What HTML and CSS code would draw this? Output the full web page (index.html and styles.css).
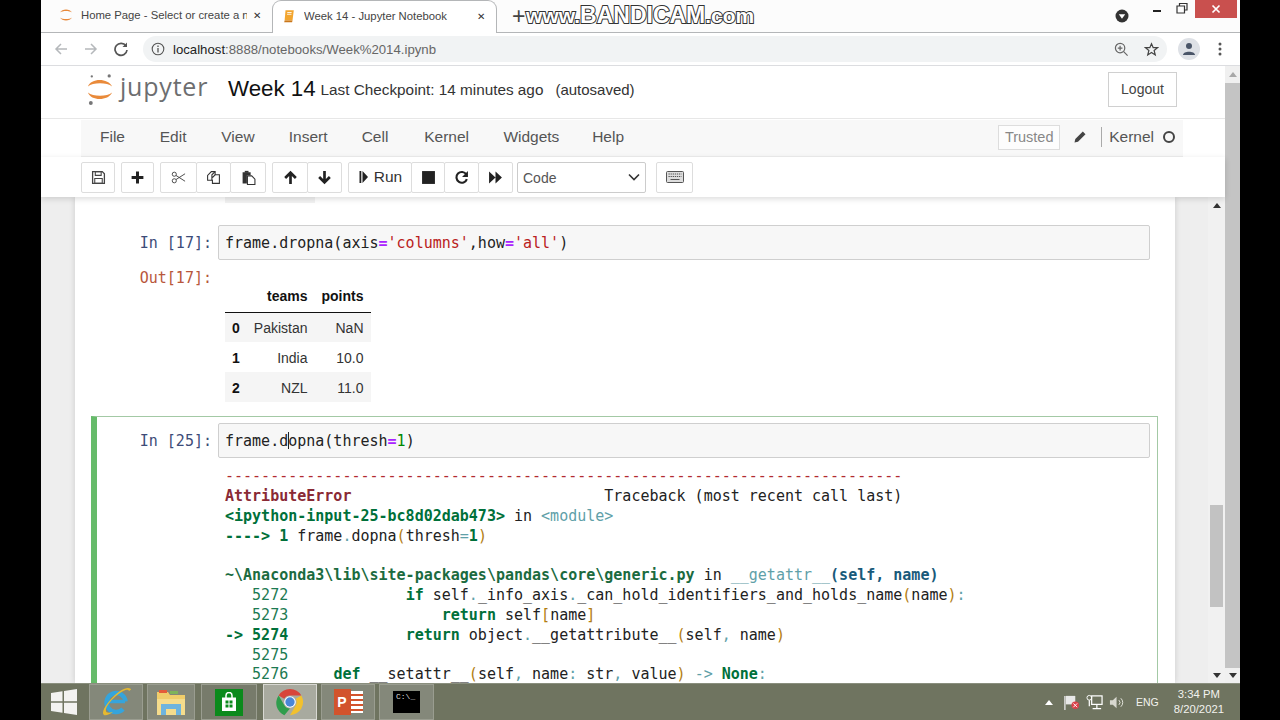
FILE: index.html
```html
<!DOCTYPE html>
<html lang="en">
<head>
<meta charset="utf-8">
<title>Week 14 - Jupyter Notebook</title>
<link rel="stylesheet" href="styles.css">
</head>
<body>
<div class="window">
  <div class="tabstrip">
    <div class="tab">
      <svg class="fav" viewBox="0 0 16 16"><path d="M2 5.500C4 1.500 12 1.500 14 5.500C11.500 3.500 4.500 3.500 2 5.500Z" fill="#e8883a"/><path d="M2 10.500C4 14.500 12 14.500 14 10.500C11.500 12.500 4.500 12.500 2 10.500Z" fill="#e8883a"/></svg>
      <span class="tab-title">Home Page - Select or create a n</span>
      <span class="tab-x">✕</span>
    </div>
    <div class="tab active">
      <svg class="fav book" viewBox="0 0 16 16"><path d="M4 1.500H13.500L12 13H3Z" fill="#f2a52e"/><path d="M3 13L2.500 15H11.500L12 13Z" fill="#c9761a"/><path d="M6 4H11M5.800 6H10.800" stroke="#fff" stroke-width="1"/></svg>
      <span class="tab-title">Week 14 - Jupyter Notebook</span>
      <span class="tab-x">✕</span>
    </div>
    <span class="newtab">+</span>
    <div class="winbtns">
      <svg class="badge" viewBox="0 0 14 14"><circle cx="7" cy="7" r="6.500" fill="#333"/><path d="M3.800 5.300H10.200L7 9.800Z" fill="#fff"/></svg>
      <svg class="wb" viewBox="0 0 16 16"><path d="M4 9H12" stroke="#222" stroke-width="2"/></svg>
      <svg class="wb" viewBox="0 0 16 16"><path d="M5.500 5V2.500H13V9H10.500M3 5H10.500V12H3Z" fill="none" stroke="#333" stroke-width="1.200"/></svg>
      <div class="close"><svg viewBox="0 0 10 10" width="10" height="10"><path d="M1.500 1.500L8.500 8.500M8.500 1.500L1.500 8.500" stroke="#fff" stroke-width="1.700"/></svg></div>
    </div>
  </div>
  <div class="addrbar">
    <svg class="nav" viewBox="0 0 16 16"><path d="M14 8H3M8 3L3 8L8 13" fill="none" stroke="#b5b8bb" stroke-width="1.500"/></svg>
    <svg class="nav" viewBox="0 0 16 16"><path d="M2 8H13M8 3L13 8L8 13" fill="none" stroke="#b5b8bb" stroke-width="1.500"/></svg>
    <svg class="nav" viewBox="0 0 16 16"><path d="M13 5A6 6 0 1 0 14 9" fill="none" stroke="#555" stroke-width="1.700"/><path d="M14 1.500V6H9.500Z" fill="#555"/></svg>
    <div class="omni">
      <svg class="info" viewBox="0 0 14 14"><circle cx="7" cy="7" r="5.800" fill="none" stroke="#555" stroke-width="1.100"/><path d="M7 6V10.500M7 3.500V5" stroke="#555" stroke-width="1.300"/></svg>
      <span class="url"><b>localhost</b>:8888/notebooks/Week%2014.ipynb</span>
      <svg class="omni-ic" viewBox="0 0 16 16"><circle cx="6.500" cy="6.500" r="5" fill="none" stroke="#666" stroke-width="1.300"/><path d="M10.300 10.300L14.500 14.500M4 6.500H9M6.500 4V9" stroke="#666" stroke-width="1.300"/></svg>
      <svg class="omni-ic star" viewBox="0 0 16 16"><path d="M8 1.800L9.800 6H14.400L10.800 9L12 13.800L8 11.200L4 13.800L5.200 9L1.600 6H6.200Z" fill="none" stroke="#444" stroke-width="1.300"/></svg>
    </div>
    <div class="avatar"><svg viewBox="0 0 16 16" width="16" height="16"><circle cx="8" cy="5" r="3" fill="#4a5568"/><path d="M2 14C2 9.500 14 9.500 14 14Z" fill="#4a5568"/></svg></div>
    <svg class="dots" viewBox="0 0 4 16"><circle cx="2" cy="3" r="1.500" fill="#555"/><circle cx="2" cy="8" r="1.500" fill="#555"/><circle cx="2" cy="13" r="1.500" fill="#555"/></svg>
  </div>

  <div class="page">
    <div class="page-main">
      <div class="header">
        <div class="logo">
          <svg class="logo-mark" viewBox="0 0 30 36"><path d="M2 15C5 6 23 6 27 15C22 10.500 7 10.500 2 15Z" fill="#e98a3a"/><path d="M2 21C5 30 23 30 27 21C22 25.500 7 25.500 2 21Z" fill="#e98a3a"/><circle cx="24" cy="4" r="1.700" fill="#767677"/><circle cx="5" cy="32" r="2" fill="#767677"/><circle cx="6" cy="4.500" r="1.200" fill="#767677"/></svg>
          <span class="logo-word">jupyter</span>
        </div>
        <span class="nb-name">Week 14</span>
        <span class="checkpoint">Last Checkpoint: 14 minutes ago</span>
        <span class="autosaved">(autosaved)</span>
        <span class="logout">Logout</span>
      </div>
      <div class="menubar">
        <span class="mi m-file">File</span><span class="mi m-edit">Edit</span><span class="mi m-view">View</span><span class="mi m-insert">Insert</span><span class="mi m-cell">Cell</span><span class="mi m-kernel">Kernel</span><span class="mi m-widgets">Widgets</span><span class="mi m-help">Help</span>
        <span class="trusted">Trusted</span>
        <svg class="pencil" viewBox="0 0 14 14"><path d="M1.500 12.500L2.300 9L9.800 1.500L12.500 4.200L5 11.700Z" fill="#444"/></svg>
        <span class="kernel-name">Kernel</span>
        <span class="kernel-dot"></span>
      </div>
      <div class="toolbar">
        <div class="group"><span class="btn w-33"><svg viewBox="0 0 14 14"><path d="M1.500 1.500H10.500L12.500 3.500V12.500H1.500Z" fill="none" stroke="#444" stroke-width="1.200"/><path d="M4 1.500H9.500V5H4ZM3.500 8H10.500V12.500H3.500Z" fill="none" stroke="#444" stroke-width="1"/></svg></span></div>
        <div class="group"><span class="btn w-32"><svg viewBox="0 0 14 14"><path d="M7 1.500V12.500M1.500 7H12.500" stroke="#222" stroke-width="2.800"/></svg></span></div>
        <div class="group">
          <span class="btn w-36"><svg viewBox="0 0 16 14"><circle cx="3.500" cy="3.500" r="2.200" fill="none" stroke="#444"/><circle cx="3.500" cy="10.500" r="2.200" fill="none" stroke="#444"/><path d="M5.300 4.800L15 11M5.300 9.200L15 3" stroke="#444"/></svg></span>
          <span class="btn w-34"><svg viewBox="0 0 14 14"><path d="M5 1.500H8.500V4.500H12.500V12.500H6V9.500H1.500V5Z" fill="none" stroke="#333"/><path d="M8.500 1.500L5.500 4.500V9.500M8.500 4.500L6 7" fill="none" stroke="#333"/></svg></span>
          <span class="btn w-35"><svg viewBox="0 0 14 14"><path d="M1.500 2H9V5H5.500V12.500H1.500Z" fill="#333"/><path d="M3.500 0.800H7V2.500H3.500Z" fill="#333"/><path d="M6 5.500H10L13 8.500V13.500H6Z" fill="#fff" stroke="#333"/></svg></span>
        </div>
        <div class="group">
          <span class="btn w-35"><svg viewBox="0 0 14 14"><path d="M7 13V2.500M2 7.500L7 2.500L12 7.500" fill="none" stroke="#222" stroke-width="2.500"/></svg></span>
          <span class="btn w-34"><svg viewBox="0 0 14 14"><path d="M7 1V11.500M2 6.500L7 11.500L12 6.500" fill="none" stroke="#222" stroke-width="2.500"/></svg></span>
        </div>
        <div class="group">
          <span class="btn run"><svg class="run-ic" viewBox="0 0 10 14"><path d="M1 1H2.800V13H1ZM4 1L9.500 7L4 13Z" fill="#222"/></svg>Run</span>
          <span class="btn w-33"><svg viewBox="0 0 14 14"><rect x="1" y="1" width="12" height="12" fill="#222"/></svg></span>
          <span class="btn w-34"><svg viewBox="0 0 14 14"><path d="M11.500 4.200A5 5 0 1 0 12 8.500" fill="none" stroke="#222" stroke-width="2"/><path d="M13 1V6.500H7.500Z" fill="#222"/></svg></span>
          <span class="btn w-34"><svg viewBox="0 0 14 14"><path d="M1 1.500L7 7L1 12.500ZM7 1.500L13 7L7 12.500Z" fill="#222"/></svg></span>
        </div>
        <div class="select"><span class="select-val">Code</span><svg viewBox="0 0 12 8" width="12" height="8"><path d="M1 1.500L6 6.500L11 1.500" fill="none" stroke="#333" stroke-width="1.600"/></svg></div>
        <div class="group kb"><span class="btn w-36"><svg class="kb-ic" viewBox="0 0 18 12"><rect x="0.500" y="0.500" width="17" height="11" rx="1" fill="#ddd" stroke="#555"/><path d="M2.500 3H15.500M2.500 5.500H15.500" stroke="#555" stroke-dasharray="1.300 .8"/><path d="M4.500 8.500H13.500" stroke="#555"/></svg></span></div>
      </div>

      <div class="nb-area">
        <div class="nb-scroll">
          <div class="notebook">
            <div class="residue"></div>
            <div class="cell">
              <div class="in-row">
                <div class="prompt in">In [17]:</div>
                <div class="input">frame.dropna(axis<span class="op">=</span><span class="str">'columns'</span>,how<span class="op">=</span><span class="str">'all'</span>)</div>
              </div>
              <div class="out-row">
                <div class="prompt out">Out[17]:</div>
                <div class="out-body">
                  <table class="df">
                    <thead><tr><th></th><th>teams</th><th>points</th></tr></thead>
                    <tbody>
                      <tr><th>0</th><td>Pakistan</td><td>NaN</td></tr>
                      <tr><th>1</th><td>India</td><td>10.0</td></tr>
                      <tr><th>2</th><td>NZL</td><td>11.0</td></tr>
                    </tbody>
                  </table>
                </div>
              </div>
            </div>
            <div class="cell selected">
              <div class="in-row">
                <div class="prompt in">In [25]:</div>
                <div class="input">frame.d<span class="cursor"></span>opna(thresh<span class="op">=</span><span class="num">1</span>)</div>
              </div>
              <pre class="tb"><span class="r">---------------------------------------------------------------------------</span>
<span class="rb">AttributeError</span>                            Traceback (most recent call last)
<span class="g">&lt;ipython-input-25-bc8d02dab473&gt;</span> in <span class="c">&lt;module&gt;</span>
<span class="g">----&gt; 1</span> frame<span class="c">.</span>dopna<span class="y">(</span>thresh<span class="c">=</span><span class="g">1</span><span class="y">)</span>

<span class="gp">~\Anaconda3\lib\site-packages\pandas\core\generic.py</span> in <span class="c">__getattr__</span><span class="bl">(self, name)</span>
   <span class="gn">5272</span>             <span class="g">if</span> self<span class="c">.</span>_info_axis<span class="c">.</span>_can_hold_identifiers_and_holds_name<span class="y">(</span>name<span class="y">)</span><span class="c">:</span>
   <span class="gn">5273</span>                 <span class="g">return</span> self<span class="y">[</span>name<span class="y">]</span>
<span class="g">-&gt; 5274</span>             <span class="g">return</span> object<span class="c">.</span>__getattribute__<span class="y">(</span>self<span class="c">,</span> name<span class="y">)</span>
   <span class="gn">5275</span> 
   <span class="gn">5276</span>     <span class="g">def</span> __setattr__<span class="y">(</span>self<span class="c">,</span> name<span class="c">:</span> str<span class="c">,</span> value<span class="y">)</span> <span class="c">-&gt;</span> <span class="g">None</span><span class="c">:</span></pre>
            </div>
          </div>
        </div>
        <div class="inner-sb">
          <svg class="arr" viewBox="0 0 8 5"><path d="M0 5L4 0L8 5Z" fill="#333"/></svg>
          <div class="inner-track"><div class="inner-thumb"></div></div>
          <svg class="arr" viewBox="0 0 8 5"><path d="M0 0L4 5L8 0Z" fill="#333"/></svg>
        </div>
      </div>
    </div>
    <div class="outer-sb">
      <svg class="arr" viewBox="0 0 8 5"><path d="M0 5L4 0L8 5Z" fill="#a8a8a8"/></svg>
      <div class="outer-thumb"></div>
      <svg class="arr" viewBox="0 0 8 5"><path d="M0 0L4 5L8 0Z" fill="#333"/></svg>
    </div>
  </div>

  <div class="taskbar">
    <div class="start"><svg viewBox="0 0 26 26" width="26" height="26"><path d="M0 4L11.500 2.300V12.300H0ZM13 2L26 0V12.300H13ZM0 13.700H11.500V23.700L0 22ZM13 13.700H26V26L13 24Z" fill="#f3f3f1"/></svg></div>
    <div class="tb-btn w-54"><svg viewBox="0 0 32 32" width="32" height="32"><path d="M25.500 15.500A9.500 9.500 0 1 0 23 23" fill="none" stroke="#35a4dc" stroke-width="4.500"/><path d="M9 15.500H25" stroke="#35a4dc" stroke-width="3.500"/><path d="M31 3C27 0 20 4 13 11C5 19 1 27 4 29C6 30 10 28 13 26C9 27 6 27 6 25C5 22 10 15 16 10C22 5 28 2 29 5C31 4 31 3 31 3Z" fill="#e6b930"/></svg></div>
    <div class="tb-btn w-48"><svg viewBox="0 0 30 30" width="30" height="30"><path d="M1 5H12L14 8H29V14H1Z" fill="#f0cd6a"/><path d="M1 12H29V28H1Z" fill="#f5dc8c"/><rect x="3" y="3" width="8" height="3" fill="#e45c3a"/><rect x="14" y="4" width="8" height="3" fill="#7fb35a"/><path d="M5 17H25V28H20V22H10V28H5Z" fill="#6eb4de"/></svg></div>
    <div class="tb-gap"></div>
    <div class="tb-btn w-56"><div class="store"><svg viewBox="0 0 18 20" width="18" height="20"><path d="M6 6V3.500A3 3 0 0 1 12 3.500V6" fill="none" stroke="#fff" stroke-width="1.500"/><path d="M2 5.500H16V19H2Z" fill="#fff"/><path d="M5.500 8.500H8.500V11.500H5.500ZM9.500 8.500H12.500V11.500H9.500ZM5.500 12.500H8.500V15.500H5.500ZM9.500 12.500H12.500V15.500H9.500Z" fill="#0b8a1c"/></svg></div></div>
    <div class="tb-btn w-54 on"><svg viewBox="0 0 32 32" width="30" height="30"><path d="M16 2A14 14 0 0 1 28.100 9H16A7 7 0 0 0 9.900 12.500L3.900 9A14 14 0 0 1 16 2Z" fill="#d8453a"/><path d="M3.900 9L9.900 19.500A7 7 0 0 0 16 23L10 30A14 14 0 0 1 3.900 9Z" fill="#2f9d4c"/><path d="M28.100 9A14 14 0 0 1 16 30L22.100 19.500A7 7 0 0 0 22.100 12.500L28.100 9Z" fill="#f2c12e"/><circle cx="16" cy="16" r="6.200" fill="#fff"/><circle cx="16" cy="16" r="5" fill="#4a86d8"/></svg></div>
    <div class="tb-btn w-54"><div class="ppt"><span class="ppt-p">P</span><span class="ppt-doc"></span></div></div>
    <div class="tb-btn w-55"><div class="cmd">C:\_</div></div>
    <div class="tray">
      <svg class="t-caret" viewBox="0 0 8 5"><path d="M0 5L4 0L8 5Z" fill="#fff"/></svg>
      <svg class="t-ic" viewBox="0 0 18 18"><path d="M2 2V17" stroke="#ddd" stroke-width="1.500"/><path d="M3 2H13V11H3Z" fill="#e8e8e8"/><circle cx="13" cy="12" r="4" fill="#d9414a"/><path d="M11 10L15 14M15 10L11 14" stroke="#fff"/></svg>
      <svg class="t-ic" viewBox="0 0 18 18"><rect x="6" y="2" width="11" height="9" fill="none" stroke="#fff" stroke-width="1.300"/><circle cx="3.500" cy="4" r="2.500" fill="none" stroke="#fff"/><path d="M3.500 6.500V13M11.500 11V15M7 15.500H16" stroke="#fff" stroke-width="1.300"/></svg>
      <svg class="t-ic" viewBox="0 0 18 18"><path d="M1 6.500H4L8 3V15L4 11.500H1Z" fill="#d8d8d0"/><path d="M10.500 6.500A3.500 3.500 0 0 1 10.500 11.500M12.500 4.500A6 6 0 0 1 12.500 13.500" fill="none" stroke="#e8e8e0"/></svg>
      <span class="t-lang">ENG</span>
      <div class="t-clock"><span>3:34 PM</span><span>8/20/2021</span></div>
    </div>
  </div>
</div>
<div class="watermark"><span class="wm-s">www.</span>BANDICAM<span class="wm-s">.com</span></div>
</body>
</html>
```
FILE: styles.css
```css
* { box-sizing: border-box; }
html, body { margin: 0; height: 100%; background: #000; overflow: hidden; }
body { font-family: "Liberation Sans", Arial, sans-serif; color: #333; position: relative; }
svg { display: block; flex: none; }

.window { width: 1199px; height: 720px; margin-left: 41px; display: flex; flex-direction: column; background: #fff; }

/* tab strip */
.tabstrip { height: 33px; flex: none; display: flex; align-items: flex-end; background: #fcfcfc; border-bottom: 1px solid #b4b6b8; position: relative; }
.tab { width: 231px; height: 32px; display: flex; align-items: center; padding: 0 11px 2px 17px; font-size: 11.300px; color: #444; }
.tab.active { width: 225px; height: 33px; margin-bottom: -1px; padding: 0 11px 2px 9px; background: #fff; border: 1px solid #b4b6b8; border-bottom: none; border-radius: 9px 9px 0 0; }
.fav { width: 16px; height: 16px; margin-right: 7px; }
.book { width: 14px; margin-right: 8px; }
.tab-title { flex: 1; white-space: nowrap; overflow: hidden; }
.tab-x { font-size: 10px; color: #333; margin-left: 6px; }
.newtab { font-size: 23px; line-height: 30px; color: #444; margin-left: 15px; align-self: center; }
.winbtns { margin-left: auto; display: flex; align-items: flex-start; height: 100%; }
.badge { width: 14px; height: 14px; margin: 9px 20px 0 0; }
.wb { width: 16px; height: 16px; margin: 2px 9px 0 0; }
.wb + .wb { margin: 1px 5px 0 0; }
.close { width: 42px; height: 18px; background: #c9504e; display: flex; align-items: center; justify-content: center; margin-right: 3px; }

/* address bar */
.addrbar { height: 33px; flex: none; display: flex; align-items: center; padding-left: 12px; background: #fff; border-bottom: 1px solid #dcdde0; }
.nav { width: 16px; height: 16px; margin-right: 14px; }
.omni { width: 1024px; height: 26px; border-radius: 13px; background: #f1f3f4; display: flex; align-items: center; padding-left: 8px; }
.info { width: 14px; height: 14px; margin-right: 8px; }
.url { font-size: 13.200px; color: #666; flex: 1; }
.url b { font-weight: normal; color: #222; }
.omni-ic { width: 15px; height: 15px; margin-right: 15px; }
.star { margin-right: 8px; }
.avatar { width: 22px; height: 22px; border-radius: 50%; background: #dee1e6; display: flex; align-items: center; justify-content: center; margin-left: 11px; }
.dots { width: 4px; height: 16px; margin-left: 18px; }

/* page */
.page { flex: 1; min-height: 0; display: flex; }
.page-main { flex: 1; min-width: 0; display: flex; flex-direction: column; }
.outer-sb { width: 15px; flex: none; background: #f0f0f0; display: flex; flex-direction: column; align-items: center; padding-top: 6px; padding-bottom: 5px; }
.arr { width: 8px; height: 5px; }
.outer-thumb { flex: 1; width: 15px; background: #c4c4c4; margin: 6px 0 5px; }

.header { height: 53px; flex: none; display: flex; align-items: center; position: relative; border-bottom: 1px solid #e7e7e7; padding: 0 0 5px 45px; }
.logo { display: flex; align-items: center; width: 142px; }
.logo-mark { width: 29px; height: 35px; margin-right: 5px; }
.logo-word { font-family: "Open Sans", sans-serif; font-size: 25px; color: #6d6e70; letter-spacing: .8px; margin-top: -7px; }
.nb-name { font-size: 22.300px; color: #111; margin-right: 5px; margin-top: -1px; }
.checkpoint { font-size: 15.300px; color: #333; margin-right: 12px; }
.autosaved { font-size: 15px; color: #333; }
.logout { margin-left: auto; margin-right: 48px; width: 69px; height: 35px; border: 1px solid #d0d0d0; display: flex; align-items: center; justify-content: center; font-size: 14px; color: #444; margin-top: -1px; }

.menubar { height: 37px; flex: none; margin: 1px 42px 0 40px; padding-bottom: 2px; background: #f8f8f8; border-bottom: 1px solid #eee; display: flex; align-items: center; font-size: 15.500px; color: #555; }
.mi { display: block; }
.m-file { margin-left: 19px; }
.m-edit { margin-left: 34.800px; }
.m-view { margin-left: 34.800px; }
.m-insert { margin-left: 34.100px; }
.m-cell { margin-left: 34.200px; }
.m-kernel { margin-left: 35.800px; }
.m-widgets { margin-left: 34.400px; }
.m-help { margin-left: 32.800px; }
.trusted { margin-left: auto; width: 62px; height: 25px; border: 1px solid #ddd; background: #fdfdfd; color: #888; font-size: 14.500px; display: flex; align-items: center; justify-content: center; }
.pencil { width: 14px; height: 14px; margin: 0 14px 0 13px; }
.kernel-name { border-left: 1px solid #aaa; padding-left: 7px; height: 20px; line-height: 20px; color: #555; }
.kernel-dot { width: 12px; height: 12px; border: 2px solid #444; border-radius: 50%; margin: 0 8px 0 9px; }

.toolbar { height: 40px; flex: none; display: flex; align-items: center; padding-left: 40px; background: #fff; box-shadow: 0 2px 6px rgba(0,0,0,.14); position: relative; z-index: 2; }
.group { display: flex; margin-right: 7px; }
.btn { height: 31px; border: 1px solid #ddd; margin-right: -1px; background: #fff; display: flex; align-items: center; justify-content: center; border-radius: 2px; color: #333; }
.btn svg { width: 15px; height: 15px; }
.btn .run-ic { width: 11px; height: 14px; margin-right: 5px; }
.btn .kb-ic { width: 18px; height: 12px; }
.w-32 { width: 33px; }
.w-33 { width: 34px; }
.w-34 { width: 35px; }
.w-35 { width: 36px; }
.w-36 { width: 37px; }
.run { width: 64px; font-size: 15.500px; }
.select { width: 129px; height: 31px; margin-left: -2px; margin-right: 10px; border: 1px solid #ccc; border-radius: 2px; font-size: 14px; color: #555; display: flex; align-items: center; justify-content: space-between; padding: 0 5px 0 5px; }
.select-val { padding-top: 2px; }

/* notebook */
.nb-area { flex: 1; min-height: 0; display: flex; background: #eee; position: relative; }
.nb-scroll { flex: 1; min-width: 0; overflow: hidden; padding-left: 34px; }
.notebook { width: 1100px; height: 100%; background: #fff; box-shadow: 0 0 6px rgba(0,0,0,.15); padding: 0 16px; overflow: hidden; }
.residue { height: 6px; width: 90px; margin-left: 134px; background: #f2f2f2; }
.cell { padding: 22px 9px 0 0; }
.in-row { display: flex; }
.prompt { width: 127px; flex: none; text-align: right; padding-right: 6px; font-family: "DejaVu Sans Mono", monospace; font-size: 15px; line-height: 20px; padding-top: 8px; }
.prompt.in { color: #3d4c78; }
.prompt.out { color: #b8573c; }
.input { flex: 1; height: 35px; border: 1px solid #cfcfcf; border-radius: 2px; background: #f7f7f7; font-family: "DejaVu Sans Mono", monospace; font-size: 15px; line-height: 20px; padding: 7px 6px 0; color: #222; white-space: pre; }
.op { color: #a2f; font-weight: bold; }
.str { color: #ba2121; }
.num { color: #080; }
.cursor { display: inline-block; width: 1px; height: 17px; background: #222; vertical-align: -3px; margin-right: -1px; }
.out-row { display: flex; margin-top: 8px; }
.out-row .prompt { padding-top: 0; }
.out-body { padding: 12px 7px 0; }
.df { border-collapse: collapse; font-size: 14px; color: #111; }
.df th, .df td { text-align: right; padding: 1px 7px 0; height: 30px; font-weight: normal; white-space: nowrap; }
.df th { font-weight: bold; }
.df thead th { height: 32px; padding-top: 0; border-bottom: 1px solid #111; }
.df tbody tr:nth-child(odd) { background: #f5f5f5; }
.df tbody tr td { color: #333; }

.selected { margin: 14px 0 0; border: 1px solid #a3c9a5; border-left: 6px solid #66bb6a; padding: 6px 7px 0 0; height: 290px; width: 1067px; overflow: hidden; }
.selected .prompt { width: 121px; }
.tb { margin: 9px 0 0 128px; font-family: "DejaVu Sans Mono", monospace; font-size: 15px; line-height: 19.850px; color: #222; white-space: pre; }
.r { color: #b22b31; }
.rb { color: #8a2a35; font-weight: bold; }
.g { color: #00703a; font-weight: bold; }
.gn { color: #1c7a52; }
.gp { color: #1c6b3f; font-weight: bold; }
.c { color: #60a0a8; }
.y { color: #b27d12; }
.bl { color: #195a7a; font-weight: bold; }

.inner-sb { width: 17px; flex: none; display: flex; flex-direction: column; align-items: center; padding: 6px 0 5px; background: #f1f1f1; }
.inner-track { flex: 1; width: 100%; display: flex; flex-direction: column; justify-content: flex-end; padding: 0 2px 66px; }
.inner-thumb { height: 102px; background: #c2c2c2; }

/* taskbar */
.taskbar { height: 37px; flex: none; display: flex; align-items: stretch; background: #6f7460; border-top: 1px solid #8a8f7e; }
.start { width: 48px; display: flex; align-items: center; justify-content: center; padding-right: 3px; }
.tb-btn { background: #84887a; border: 1px solid #9a9d90; margin-right: 4px; display: flex; align-items: center; justify-content: center; }
.tb-btn.on { background: #a8aa9f; border-color: #d8d8d2; }
.w-54 { width: 54px; }
.w-48 { width: 48px; }
.w-55 { width: 55px; }
.w-56 { width: 56px; background: #777b6b; margin-right: 6px; }
.tb-gap { width: 2px; }
.store { width: 28px; height: 27px; background: #0b8a1c; display: flex; align-items: center; justify-content: center; }
.ppt { display: flex; align-items: center; }
.ppt-p { width: 17px; height: 26px; background: #d2532c; color: #fff; font-weight: bold; font-size: 14px; line-height: 26px; text-align: center; }
.ppt-doc { width: 12px; height: 22px; background: repeating-linear-gradient(#fff 0 3px, #d2532c 3px 5px); }
.cmd { width: 27px; height: 22px; background: #000; color: #ddd; font-family: "Liberation Mono", monospace; font-size: 8px; line-height: 12px; padding-left: 3px; }
.tray { margin-left: auto; display: flex; align-items: center; color: #f2f2ee; font-size: 11.300px; padding-right: 16px; }
.t-caret { width: 8px; height: 5px; margin-right: 10px; }
.t-ic { width: 17px; height: 17px; margin-right: 6px; }
.t-lang { font-size: 10.500px; margin: 0 15px 0 4px; }
.t-clock { display: flex; flex-direction: column; align-items: center; line-height: 15px; }

/* recorder watermark over the tab strip */
.watermark { position: absolute; left: 526px; top: 3px; font-family: "Liberation Sans", sans-serif; font-weight: bold; font-size: 23px; line-height: 24px; color: #fff; -webkit-text-stroke: 2px #333; paint-order: stroke fill; white-space: nowrap; }
.wm-s { font-size: 21px; }
```
